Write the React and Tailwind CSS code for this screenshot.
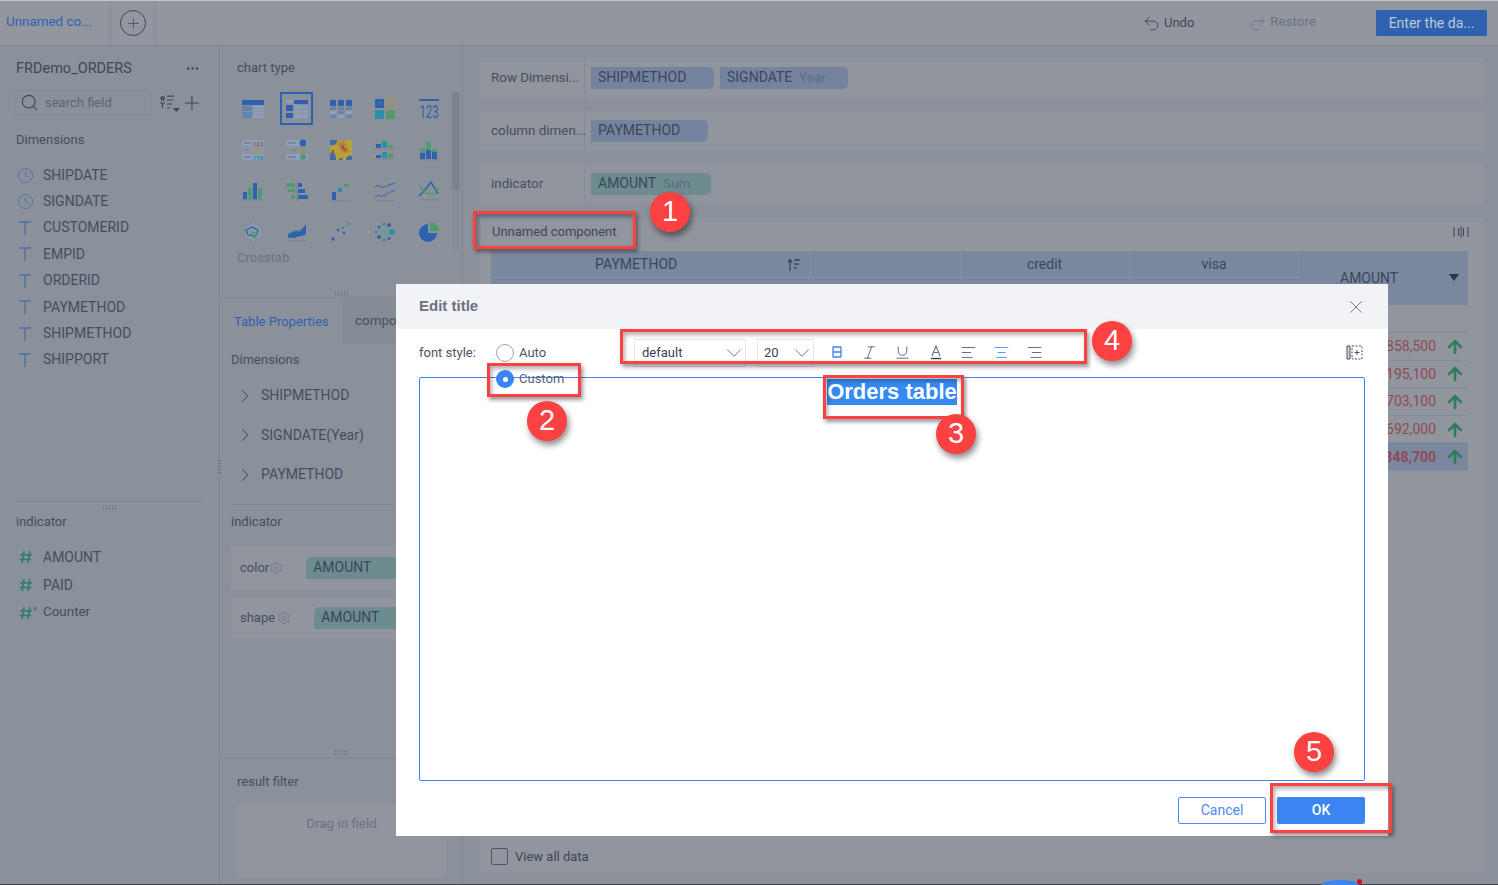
import React from "react";
import {
  ArrowUp,
  AlignCenter,
  AlignLeft,
  AlignRight,
  ChevronDown,
  ChevronRight,
  Clock,
  Ellipsis,
  Italic,
  Plus,
  Redo2,
  Search,
  Settings,
  Underline,
  Undo2,
  X,
} from "lucide-react";

const B = "#2f62ae";
const M = "#4f74ad";
const L = "#8d9fba";
const G = "#4f9a6e";
const TL = "#2a8fa8";
const GR = "#7b8696";

const Icon = ({ children }) => (
  <svg width="22" height="22" viewBox="0 0 22 22" className="overflow-visible">
    {children}
  </svg>
);

const Bars = ({ items }) =>
  items.map((b, i) => <rect key={i} x={b[0]} y={b[1]} width={b[2]} height={b[3]} fill={b[4]} />);

// chart type drawings, in the order of the grid
const chartIcons = [
  <Bars items={[[0,2,22,5,B],[0,8,10,5,"#6683b0"],[0,14,10,6,"#6683b0"],[11,8,11,2,L],[11,11,11,2,L],[11,14,11,2,L],[11,17,11,3,L]]} />,
  <Bars items={[[0,2,7,3,L],[8,2,14,4,B],[0,7,7,6,B],[0,15,7,5,B],[8,8,7,3,L],[16,8,6,3,L],[8,12,7,3,L],[16,12,6,3,L],[8,16,7,4,L],[16,16,6,4,L]]} />,
  <Bars items={[[0,2,6,6,B],[8,2,6,6,B],[16,2,6,6,B],[0,9,6,3,"#6683b0"],[8,9,6,3,"#6683b0"],[16,9,6,3,"#6683b0"],[0,13,6,3,L],[8,13,6,3,"#6683b0"],[16,13,6,3,L],[0,17,6,3,"#6683b0"],[8,17,6,3,L],[16,17,6,3,"#6683b0"]]} />,
  <>
    <Bars items={[[1,1,9,9,B],[1,12,9,9,TL],[12,12,9,9,G]]} />
    <rect x="12.5" y="1.5" width="8" height="8" fill="none" stroke="#b0923c" strokeWidth="1.4" strokeDasharray="2 1.4" />
    <rect x="4" y="4" width="3" height="3" fill="#4b6f9e" />
  </>,
  <>
    <rect x="1" y="1" width="20" height="2" fill={B} />
    <text x="11" y="19.5" textAnchor="middle" fontSize="18" fill={B} fontFamily="Roboto" textLength="19" lengthAdjust="spacingAndGlyphs">123</text>
  </>,
  <>
    <Bars items={[[0,1,22,6,L],[0,8,22,6,"#8c97a8"],[0,15,22,6,L],[2,3,7,2,GR],[2,10,5,2,GR],[2,17,7,2,GR]]} />
    <text x="11" y="6.5" fontSize="6" fontWeight="700" fill="#a8525e" fontFamily="Roboto">123</text>
    <text x="11" y="13.5" fontSize="6" fontWeight="700" fill="#ad9a3e" fontFamily="Roboto">90</text>
    <text x="11" y="20.5" fontSize="6" fontWeight="700" fill={TL} fontFamily="Roboto">778</text>
  </>,
  <>
    <Bars items={[[0,1,22,6,L],[0,15,22,6,L],[2,3,8,2,GR],[5,10,5,2,GR],[2,17,8,2,GR]]} />
    <circle cx="17" cy="4" r="3.4" fill={B} />
    <circle cx="17" cy="11" r="1.8" fill="#b0923c" />
    <circle cx="17" cy="18" r="3" fill={G} />
  </>,
  <>
    <rect x="0" y="1" width="22" height="20" fill="#b6a13c" />
    <path d="M0 1h7c1 4-3 6-7 5zM0 14c4-2 6 1 6 7H0zM16 21c0-4 3-5 6-4v4zM9 21c0-3 3-3 4 0z" fill="#3e6ca8" />
    <path d="M8 3c5-3 9 0 8 5 3 1 4 4 2 6-4 1-6-1-8-4-2-2-3-5-2-7z" fill="#b8853a" />
    <path d="M11 6c2-1 3 1 3 3 2 1 3 2 2 3-3 0-5-3-5-6zM2 11c2-1 3 1 2 3-2 1-3-1-2-3z" fill="#a84a50" />
  </>,
  <>
    <Bars items={[[2,5,5,4,B],[8,2,5,7,TL],[14,6,5,3,G],[2,16,5,3,B],[8,13,5,6,TL],[14,15,5,4,G],[0,10,22,1,GR],[0,20,22,1,GR]]} />
  </>,
  <Bars items={[[2,9,5,5,G],[2,14,5,6,B],[8,3,5,8,G],[8,11,5,9,B],[14,13,5,7,B],[14,10,5,3,G],[1,20,20,1.5,GR]]} />,
  <Bars items={[[1,12,4,7,B],[6,8,4,11,G],[11,3,4,16,B],[16,8,4,11,G],[0,19,20,1.5,GR]]} />,
  <Bars items={[[0,3,9,4,G],[2,9,7,3,G],[5,15,4,4,G],[10,1,1.5,20,GR],[12,3,4,4,B],[12,9,7,4,B],[12,15,10,4,B]]} />,
  <Bars items={[[2,12,4,8,B],[8,8,4,4,TL],[14,4,5,3,G],[0,20,20,1.5,GR]]} />,
  <>
    <path d="M1 7c4-4 7 2 10 0s6-3 10-4" fill="none" stroke={M} strokeWidth="1.5" />
    <path d="M1 17c4-4 7 1 10-2s6-3 10-5" fill="none" stroke={M} strokeWidth="1.5" />
    <rect x="1" y="20" width="20" height="1.5" fill={GR} />
  </>,
  <>
    <path d="M1 16L7 10L13 2L20 14" fill="none" stroke={B} strokeWidth="1.5" />
    <path d="M1 5L8 13L15 14L21 7" fill="none" stroke={G} strokeWidth="1.5" />
    <rect x="1" y="19" width="20" height="1.5" fill={GR} />
  </>,
  <>
    <path d="M11 1L20 6V16L11 21L2 16V6Z" fill="#8d98a8" stroke="#7d8797" />
    <path d="M10 6L16 9L14 15L6 14L4 9Z" fill="none" stroke={B} strokeWidth="1.3" />
    <path d="M9 11L16 13L12 17Z" fill="none" stroke={G} strokeWidth="1.3" />
  </>,
  <>
    <path d="M2 13c5-1 6-4 9-3s5-2 9-7v10c-4 3-6 1-9 3s-6 0-9 1z" fill={B} />
    <path d="M3 12c4-1 6-3 8-2s5-1 8-5" fill="none" stroke={TL} strokeWidth="1" />
    <rect x="1" y="19" width="20" height="1.5" fill={GR} />
  </>,
  <>
    <circle cx="3" cy="18" r="1.7" fill={B} /><circle cx="8" cy="9" r="1.3" fill={B} /><circle cx="9" cy="14" r="1.3" fill="#7fa0a8" />
    <circle cx="13" cy="7" r="1.3" fill={TL} /><circle cx="14" cy="12" r="1.3" fill={B} /><circle cx="19" cy="3" r="1.3" fill={TL} />
  </>,
  <>
    <circle cx="10" cy="11" r="4" fill="#6c9a98" /><circle cx="18" cy="11" r="3" fill={TL} /><circle cx="5" cy="6" r="1.5" fill={B} />
    <circle cx="10" cy="3" r="1.5" fill={TL} /><circle cx="15" cy="4" r="2" fill={B} /><circle cx="2" cy="11" r="1" fill={B} />
    <circle cx="5" cy="16" r="2" fill={B} /><circle cx="10" cy="19" r="1.6" fill={TL} /><circle cx="15" cy="17.5" r="1.5" fill={B} />
  </>,
  <>
    <path d="M10 3V12H19A9 9 0 1 1 10 3Z" fill={B} />
    <path d="M12 1A9 9 0 0 1 21 10H12Z" fill={G} />
  </>,
];

const Grip = ({ className }) => (
  <svg width="15" height="5" viewBox="0 0 15 5" className={className}>
    {[1, 4, 7, 10, 13].map((x) => (
      <g key={x}>
        <rect x={x} y="0.5" width="1.2" height="1.2" fill="#5c6675" />
        <rect x={x} y="3.2" width="1.2" height="1.2" fill="#5c6675" />
      </g>
    ))}
  </svg>
);

const TIcon = () => (
  <svg width="16" height="18" viewBox="0 0 16 18" fill="none" stroke="#4f6fa5" strokeWidth="1.4">
    <path d="M2 3H14M8 3V16" />
  </svg>
);

const HashIcon = () => (
  <svg width="16" height="16" viewBox="0 0 16 16" fill="none" stroke="#337a7c" strokeWidth="1.7">
    <path d="M6 2L4 14M12 2L10 14M2 6H14M1.5 10.5H13.5" />
  </svg>
);

const dimensionFields = [
  { name: "SHIPDATE", date: true },
  { name: "SIGNDATE", date: true },
  { name: "CUSTOMERID" },
  { name: "EMPID" },
  { name: "ORDERID" },
  { name: "PAYMETHOD" },
  { name: "SHIPMETHOD" },
  { name: "SHIPPORT" },
];

const LeftPanel = () => (
  <div className="w-[220px] shrink-0 border-r border-[#7f8792] bg-[#8a919b] relative">
    <div className="h-[455px] px-4">
      <div className="h-[44px] pt-px flex items-center justify-between pr-[3px]">
        <span className="text-[14.5px] text-[#3f4757]">FRDemo_ORDERS</span>
        <Ellipsis size={15} color="#3f4757" />
      </div>
      <div className="h-[25px] flex items-center -ml-px">
        <div className="w-[138px] h-[25px] border border-[#848b96] flex items-center pl-[4px] gap-[6px]">
          <Search size={19} color="#3f4757" strokeWidth={1.4} />
          <span className="text-[13px] text-[#5d6675]">search field</span>
        </div>
        <svg width="22" height="20" viewBox="0 0 22 20" className="ml-[7px]" fill="none" stroke="#3f4757" strokeWidth="1.2">
          <path d="M1 5H6M3 3L2.5 8M5 3L4.5 8M8 3H15M8 7H14M1 10H6M3.5 10V15M8 11H13M8 15H11" />
          <path d="M14 15H21L17.5 19Z" fill="#3f4757" stroke="none" />
        </svg>
        <Plus size={22} color="#3f4757" strokeWidth={1.2} />
      </div>
      <div className="mt-[15px] h-5 flex items-center text-[13px] text-[#454e60]">Dimensions</div>
      <div className="mt-[12px]">
        {dimensionFields.map((f) => (
          <div key={f.name} className="h-[26.4px] flex items-center">
            <span className="w-[27px] flex items-center pl-[1px]">
              {f.date ? <Clock size={17} color="#4f6fa5" strokeWidth={1.3} /> : <TIcon />}
            </span>
            <span className="text-[14px] text-[#454e60]">{f.name}</span>
          </div>
        ))}
      </div>
    </div>
    <div className="mx-4 border-t border-[#7f8792] flex justify-center pt-[3px] h-[11px]">
      <Grip />
    </div>
    <div className="px-4">
      <div className="h-5 flex items-center text-[13px] text-[#454e60]">indicator</div>
      <div className="mt-[11px] h-7 flex items-center">
        <span className="w-[27px] pl-[2px]"><HashIcon /></span>
        <span className="text-[14px] text-[#454e60]">AMOUNT</span>
      </div>
      <div className="h-7 flex items-center">
        <span className="w-[27px] pl-[2px]"><HashIcon /></span>
        <span className="text-[14px] text-[#454e60]">PAID</span>
      </div>
      <div className="h-[27px] flex items-center">
        <span className="w-[27px] pl-[2px] relative">
          <HashIcon />
          <span className="absolute left-[17px] -top-[2px] text-[10px] text-[#337a7c]">*</span>
        </span>
        <span className="text-[13.4px] text-[#454e60]">Counter</span>
      </div>
    </div>
    <div className="absolute right-[-3px] top-[413px] w-[5px] h-[14px] bg-[radial-gradient(#4d5665_0.7px,transparent_0.8px)] bg-[length:2.5px_3px]"></div>
  </div>
);

const MiddlePanel = () => (
  <div className="w-[243px] shrink-0 border-r border-[#7f8792] bg-[#8a919b] flex flex-col">
    <div className="h-[252px] relative border-b border-[#7f8792]">
      <div className="h-[42px] pt-[2px] flex items-center pl-[17px] text-[13px] text-[#454e60]">chart type</div>
      <div className="grid grid-cols-[repeat(5,44px)] auto-rows-[41px] pl-[11px]">
        {chartIcons.map((icon, i) => (
          <div key={i} className="flex items-center justify-center">
            {i === 1 ? (
              <div className="w-[33px] h-[33px] mr-px border-2 border-[#2f62ae] shadow-[0_0_0_1px_#858f9f] flex items-center justify-center">
                <Icon>{icon}</Icon>
              </div>
            ) : (
              <Icon>{icon}</Icon>
            )}
          </div>
        ))}
      </div>
      <div className="-mt-[4px] pl-[17px] text-[13px] text-[#6a7280]">Crosstab</div>
      <div className="absolute left-[232px] top-[46px] w-2 h-[158px] rounded bg-[#868d98]">
        <div className="h-[98px] rounded bg-[#7b838f]"></div>
      </div>
      <Grip className="absolute left-[114px] bottom-[1px]" />
    </div>
    <div className="h-[461px] relative border-b border-[#7f8792]">
      <div className="h-[46px] flex">
        <div className="w-[122px] pt-px flex items-center pl-[14px] text-[13px] text-[#3360b0]">Table Properties</div>
        <div className="flex-1 bg-[#858c96] flex items-center pl-[13px] text-[13.4px] text-[#454e60]">component</div>
      </div>
      <div className="px-[11px]">
        <div className="h-[30px] pt-[2px] flex items-center text-[13px] text-[#454e60]">Dimensions</div>
        <div className="pt-[2px] pb-[9px] border-b border-[#7f8792]">
          {["SHIPMETHOD", "SIGNDATE(Year)", "PAYMETHOD"].map((d) => (
            <div key={d} className="h-[39.5px] flex items-center text-[14px] text-[#454e60]">
              <ChevronRight size={22} color="#454e60" strokeWidth={1.1} className="ml-[3px] mr-[5px]" />
              {d}
            </div>
          ))}
        </div>
        <div className="h-[35px] mb-[7px] flex items-center text-[13px] text-[#454e60]">indicator</div>
        <div className="h-[42px] bg-[#91959e] flex items-center pl-[9px] mb-2">
          <span className="text-[13px] text-[#454e60]">color</span>
          <Settings size={14} color="#6d7684" strokeWidth={1.3} className="mr-[23px]" />
          <span className="w-[120px] h-[22px] rounded-tl-[6px] bg-[#6c8c90] pl-[7px] leading-[21px] text-[14px] text-[#3c4658]">AMOUNT</span>
        </div>
        <div className="h-[42px] bg-[#91959e] flex items-center pl-[9px]">
          <span className="text-[13px] text-[#454e60]">shape</span>
          <Settings size={14} color="#6d7684" strokeWidth={1.3} className="ml-[2px] mr-[23px]" />
          <span className="w-[120px] h-[22px] rounded-tl-[6px] bg-[#6c8c90] pl-[7px] leading-[21px] text-[14px] text-[#3c4658]">AMOUNT</span>
        </div>
      </div>
      <Grip className="absolute left-[114px] bottom-[3px]" />
    </div>
    <div className="flex-1 px-[17px]">
      <div className="h-[45px] flex items-center text-[13px] text-[#454e60]">result filter</div>
      <div className="w-[209px] h-[73px] bg-[#91959e] pt-[10px] text-center text-[13.4px] text-[#6a7280]">Drag in field</div>
    </div>
  </div>
);

const Chip = ({ w, green, children, sub }) => (
  <span
    className={
      "h-[22px] rounded-r-[5px] pl-[7px] leading-[21px] text-[14px] text-[#3c4658] whitespace-nowrap " +
      w + " " + (green ? "bg-[#6c8c90]" : "bg-[#76839f]")
    }
  >
    {children}
    {sub && <span className="ml-[7px] text-[13.4px] text-[#5f6a7c]">{sub}</span>}
  </span>
);

const FieldRow = ({ label, children }) => (
  <div className="h-10 bg-[#91959e] flex items-center">
    <div className="w-[105px] h-full shrink-0 border-r border-[#868c96] pl-[11px] flex items-center text-[13.4px] text-[#454e60] whitespace-nowrap">
      {label}
    </div>
    <div className="flex items-center gap-[6px] pl-[6px]">{children}</div>
  </div>
);

const tableRows = [
  { value: "858,500" },
  { value: "195,100" },
  { value: "703,100" },
  { value: "692,000" },
  { value: "848,700", total: true },
];

const MainPanel = () => (
  <div className="flex-1 bg-[#8a919b] pl-[17px] pr-[15px] pt-[12px]">
    <div className="flex flex-col gap-[13px]">
      <FieldRow label="Row Dimensi...">
        <Chip w="w-[123px]">SHIPMETHOD</Chip>
        <Chip w="w-[128px]" sub="Year">SIGNDATE</Chip>
      </FieldRow>
      <FieldRow label="column dimen...">
        <Chip w="w-[117px]">PAYMETHOD</Chip>
      </FieldRow>
      <FieldRow label="indicator">
        <Chip w="w-[120px]" green sub="Sum">AMOUNT</Chip>
      </FieldRow>
    </div>
    <div className="mt-[14px] h-[655px] bg-[#91959e] px-[11px] flex flex-col">
      <div className="h-[33px] pb-[6px] flex items-center justify-between pr-[2px]">
        <span className="text-[13px] text-[#3f4757] pl-px">Unnamed component</span>
        <svg width="18" height="14" viewBox="0 0 18 14" fill="none" stroke="#3f4757" strokeWidth="1.1">
          <path d="M2 2V12M16 2V12M6.5 3V11M11.5 3V11M9 1.5V12.5" />
        </svg>
      </div>
      <div className="w-[977px]">
        <div className="grid grid-cols-[320px_150px_169px_169px_169px] grid-rows-[27px_27px] bg-[#7a889f] text-[14px] text-[#3c4658]">
          <div className="border-r border-[#8492a8] border-b pt-px flex items-center pl-[104px] gap-[109px]">
            PAYMETHOD
            <svg width="16" height="16" viewBox="0 0 16 16" fill="none" stroke="#3c4658" strokeWidth="1.3">
              <path d="M4 14V3M2 5.5L4 2.5L6 5.5M8 3H14M8 7H13M8 11H11" />
            </svg>
          </div>
          <div className="border-r border-b border-[#8492a8]"></div>
          <div className="border-r border-b border-[#8492a8] pt-px flex items-center justify-center pr-[1px]">credit</div>
          <div className="border-r border-b border-[#8492a8] pt-px flex items-center justify-center">visa</div>
          <div className="row-span-2 flex items-center pl-[41px] gap-[51px]">
            AMOUNT
            <span className="w-0 h-0 border-x-[5px] border-x-transparent border-t-[7px] border-t-[#2c3442] -mt-[2px]"></span>
          </div>
          <div className="col-span-4"></div>
        </div>
        <div className="h-7 border-b border-[#7f8da5]"></div>
        {tableRows.map((r) => (
          <div
            key={r.value}
            className={
              "h-[27.6px] pt-px flex items-center justify-end pr-[3px] border-b border-[#7f8da5] text-[14px] text-[#8f4a55] " +
              (r.total ? "bg-[#7a889f] font-bold" : "")
            }
          >
            <span>{r.value}</span>
            <ArrowUp size={20} color="#2f7d5b" strokeWidth={3.2} className="ml-[9px]" />
          </div>
        ))}
      </div>
      <div className="mt-auto h-[34px] pt-px flex items-center gap-[7px]">
        <span className="w-[17px] h-[17px] rounded-[2px] border border-[#4f5766]"></span>
        <span className="text-[13px] text-[#3c4658]">View all data</span>
      </div>
    </div>
  </div>
);

const BoldIcon = () => (
  <svg width="16" height="16" viewBox="0 0 16 16" fill="none" stroke="#3b85f2" strokeWidth="1.3">
    <path d="M4 3H12V13H4ZM4 8H12" strokeLinejoin="round" />
  </svg>
);

const ColorIcon = () => (
  <svg width="16" height="16" viewBox="0 0 16 16" fill="none" stroke="#6b7280" strokeWidth="1.2">
    <path d="M4 12L8 2L12 12M5.5 8.5H10.5" />
    <path d="M3 14.5H13" stroke="#374151" strokeWidth="1.4" />
  </svg>
);

const Toolbar = () => (
  <div className="h-[48px] px-[23px] flex text-[14px]">
    <div className="w-[77px] pt-[11px] h-[37px] leading-[26px] text-[13px] text-[#4b5563]">font style:</div>
    <div className="w-[138px] pt-[11px] relative z-10">
      <div className="h-[26px] flex items-center gap-[5px] text-[#4b5563] text-[13px]">
        <span className="w-[18px] h-[18px] rounded-full border border-[#9ca3af]"></span>
        Auto
      </div>
      <div className="h-[26px] flex items-center gap-[5px] text-[#5b6475] text-[13px]">
        <span className="w-[18px] h-[18px] rounded-full bg-[#3b85f2] flex items-center justify-center">
          <span className="w-[5px] h-[5px] rounded-full bg-white"></span>
        </span>
        Custom
      </div>
    </div>
    <div className="mt-[10px] w-[112px] h-7 border border-[#e8e8e8] flex items-center justify-between pl-[7px] text-[13px] text-[#374151]">
      default
      <ChevronDown size={26} color="#6b7280" strokeWidth={0.9} className="-mr-[2px]" />
    </div>
    <div className="mt-[10px] ml-[11px] w-[57px] h-7 border border-[#e8e8e8] flex items-center justify-between pl-[6px] text-[13px] text-[#374151]">
      20
      <ChevronDown size={26} color="#6b7280" strokeWidth={0.9} className="-mr-[2px]" />
    </div>
    <div className="ml-[6px] mt-[15px] h-[16px] flex items-center">
      <span className="w-[33px] flex justify-center"><BoldIcon /></span>
      <span className="w-[33px] flex justify-center"><Italic size={17} color="#4b5563" strokeWidth={1.2} /></span>
      <span className="w-[33px] flex justify-center"><Underline size={17} color="#4b5563" strokeWidth={1.2} /></span>
      <span className="w-[33px] flex justify-center"><ColorIcon /></span>
      <span className="w-[33px] flex justify-center"><AlignLeft size={17} color="#4b5563" strokeWidth={1.2} /></span>
      <span className="w-[33px] flex justify-center"><AlignCenter size={17} color="#3b85f2" strokeWidth={1.2} /></span>
      <span className="w-[33px] flex justify-center"><AlignRight size={17} color="#4b5563" strokeWidth={1.2} /></span>
    </div>
    <div className="ml-auto mt-4 pr-[2px]">
      <svg width="17" height="15" viewBox="0 0 17 15" fill="none" stroke="#4b5563" strokeWidth="1">
        <path d="M1 1H4V14H1Z" fill="#d1d5db" />
        <path d="M6 1H16V14H6Z" strokeDasharray="2 1.5" />
        <path d="M8.5 7.5H13.5M11 5V10" />
      </svg>
    </div>
  </div>
);

const Modal = () => (
  <div className="absolute left-[396px] top-[284px] w-[992px] h-[552px] bg-white flex flex-col">
    <div className="h-[45px] shrink-0 bg-[#f2f3f7] flex items-center justify-between pl-[23px] pr-[21px]">
      <span className="text-[15px] font-bold text-[#6b7280] [font-family:'Liberation_Sans',Arial,sans-serif]">Edit title</span>
      <X size={22} color="#6b7280" strokeWidth={1} />
    </div>
    <Toolbar />
    <div className="mx-[23px] h-[404px] shrink-0 rounded-[2px] border border-[#3b85f2] text-center">
      <span className="inline-block mt-px h-[26px] leading-[26px] bg-[#338af0] text-white font-bold text-[22px] [font-family:'Liberation_Sans',Arial,sans-serif]">
        Orders table
      </span>
    </div>
    <div className="pt-4 pr-[23px] flex justify-end gap-[11px]">
      <button className="w-[88px] h-[27px] rounded-[2px] border border-[#4a8af4] text-[14px] text-[#4a8af4]">Cancel</button>
      <button className="w-[88px] h-[27px] rounded-[2px] bg-[#3b85f2] text-[14px] font-medium text-white">OK</button>
    </div>
  </div>
);

const markBoxes = [
  "left-[473px] top-[211px] w-[163px] h-[38px]",
  "left-[487px] top-[363px] w-[94px] h-[34px]",
  "left-[823px] top-[375px] w-[141px] h-[44px]",
  "left-[620px] top-[329px] w-[467px] h-[35px]",
  "left-[1270px] top-[783px] w-[122px] h-[50px]",
];

const markCircles = [
  { n: 1, pos: "left-[650px] top-[192px]" },
  { n: 2, pos: "left-[527px] top-[401px]" },
  { n: 3, pos: "left-[936px] top-[414px]" },
  { n: 4, pos: "left-[1092px] top-[321px]" },
  { n: 5, pos: "left-[1294px] top-[732px]" },
];

export default function App() {
  return (
    <div className="relative w-[1498px] h-[885px] overflow-hidden bg-[#8a919b] [font-family:Roboto,sans-serif]">
      <div className="h-px bg-[#c6c6c6]"></div>
      <div className="h-[45px] bg-[#91969f] border-b border-[#7f8792] flex items-center">
        <div className="w-[111px] h-full border-r border-[#838a94] pl-[6px] pb-px flex items-center text-[13.4px] text-[#3360b0]">
          Unnamed co...
        </div>
        <div className="w-[45px] h-full border-r border-[#838a94] flex items-center justify-center">
          <span className="w-[26px] h-[26px] rounded-full border border-[#3f4757] flex items-center justify-center">
            <Plus size={17} color="#3f4757" strokeWidth={1} />
          </span>
        </div>
        <div className="ml-auto flex items-center pr-[11px]">
          <Undo2 size={19} color="#3f4757" strokeWidth={1.2} />
          <span className="ml-[3px] -mt-px text-[13px] text-[#3f4757]">Undo</span>
          <Redo2 size={19} color="#6f7784" strokeWidth={1.2} className="ml-[54px]" />
          <span className="ml-[3px] -mt-px text-[13.4px] text-[#6a7280]">Restore</span>
          <button className="ml-[60px] w-[111px] h-[26px] rounded-[1px] bg-[#2f62ae] text-[14px] text-[#bcc8dc]">Enter the da...</button>
        </div>
      </div>
      <div className="flex h-[838px]">
        <LeftPanel />
        <MiddlePanel />
        <MainPanel />
      </div>
      <div className="h-px bg-[#454545]"></div>

      <div className="absolute left-[1322px] top-[880px] w-[37px] h-[10px] rounded-t-[50%] bg-[#3b85f2]"></div>
      <div className="absolute left-[1357px] top-[879px] w-[5px] h-[5px] rounded-full bg-[#f00000]"></div>

      <Modal />

      {markBoxes.map((pos) => (
        <div
          key={pos}
          className={
            "absolute border-[3px] border-[#fb4141] shadow-[2px_3px_4px_rgba(0,0,0,0.4),inset_2px_3px_4px_rgba(0,0,0,0.3)] " + pos
          }
        ></div>
      ))}
      {markCircles.map((c) => (
        <div
          key={c.n}
          className={
            "absolute w-10 h-10 rounded-full bg-[#fb4141] text-white text-[29px] flex items-center justify-center shadow-[2px_4px_6px_rgba(0,0,0,0.45)] [font-family:'Liberation_Sans',Arial,sans-serif] " +
            c.pos
          }
        >
          {c.n}
        </div>
      ))}
    </div>
  );
}
